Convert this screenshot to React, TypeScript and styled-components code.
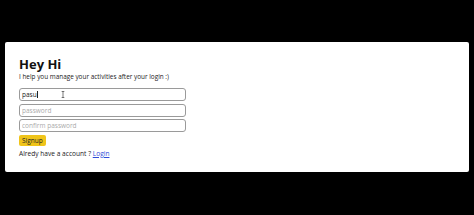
import React from "react";
import styled, { createGlobalStyle } from "styled-components";

const GlobalStyle = createGlobalStyle`
    html, body {
        margin: 0;
        padding: 0;
        background: #000;
        height: 100%;
    }
    body {
        font-family: "Open Sans", "DejaVu Sans", sans-serif;
    }
`;

const App: React.FC = () => {
    return (
        <>
            <GlobalStyle />
            <Page>
                <Card>
                    <Title>Hey Hi</Title>
                    <Subtitle>I help you manage your activities after your login :)</Subtitle>
                    <Form>
                        <FieldWrap>
                            <Input defaultValue="pasu" />
                            <Caret />
                            <Cursor viewBox="0 0 6 10" aria-hidden>
                                <path d="M1 0.5h4M1 9.5h4M3 0.5v9" stroke="#222" strokeWidth="0.9" fill="none" />
                            </Cursor>
                        </FieldWrap>
                        <Input placeholder="password" />
                        <Input placeholder="confirm password" />
                        <Button>Signup</Button>
                    </Form>
                    <Footer>
                        Alredy have a account ? <LoginLink href="#">Login</LoginLink>
                    </Footer>
                </Card>
            </Page>
        </>
    );
};

export default App;

const Page = styled.div`
    width: 474px;
    height: 215px;
    padding: 42px 5px 0 5px;
    box-sizing: border-box;
`;

const Card = styled.div`
    width: 464px;
    height: 130px;
    background: #fff;
    border-radius: 2px;
    box-sizing: border-box;
    padding: 14px 14px 0 14px;
`;

const Title = styled.h1`
    margin: 0;
    font-size: 13px;
    font-weight: 700;
    line-height: 16px;
    color: #111;
`;

const Subtitle = styled.p`
    margin: 0;
    font-size: 6.4px;
    line-height: 9px;
    color: #222;
`;

const Form = styled.div`
    display: flex;
    flex-direction: column;
    align-items: flex-start;
    gap: 2.5px;
    margin-top: 7px;
`;

const FieldWrap = styled.div`
    position: relative;
`;

const Input = styled.input`
    display: block;
    width: 167px;
    height: 13px;
    box-sizing: border-box;
    border: 1px solid #9a9a9a;
    border-radius: 3px;
    padding: 0 2px;
    font-family: "Open Sans", "DejaVu Sans", sans-serif;
    font-size: 6.5px;
    color: #222;
    outline: none;
    &::placeholder {
        color: #aaa;
    }
`;

const Caret = styled.span`
    position: absolute;
    left: 18px;
    top: 3px;
    width: 1px;
    height: 7px;
    background: #222;
`;

const Cursor = styled.svg`
    position: absolute;
    left: 42px;
    top: 3px;
    width: 4px;
    height: 7px;
`;

const Button = styled.button`
    height: 11px;
    padding: 0 3px;
    background: #f0c419;
    border: none;
    border-radius: 2px;
    font-family: "Open Sans", "DejaVu Sans", sans-serif;
    font-size: 6.5px;
    color: #222;
    line-height: 11px;
`;

const Footer = styled.p`
    margin: 3px 0 0 0;
    font-size: 6.6px;
    line-height: 10px;
    color: #222;
`;

const LoginLink = styled.a`
    color: #2f4bd8;
    text-decoration: underline;
`;
